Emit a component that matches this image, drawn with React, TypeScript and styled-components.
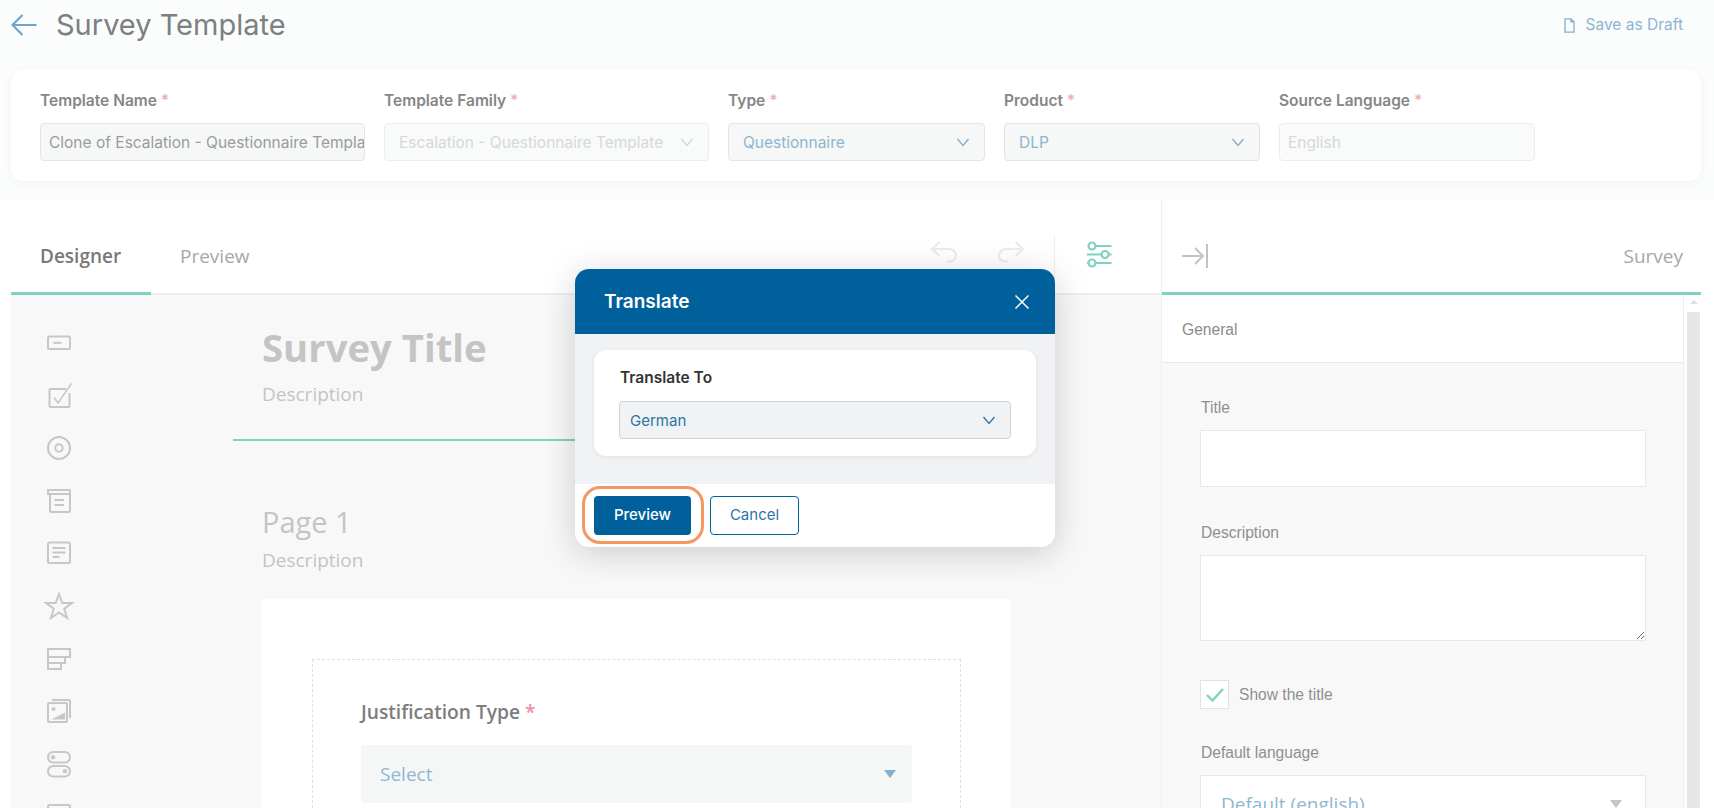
import React from "react";
import styled, { createGlobalStyle } from "styled-components";

const Global = createGlobalStyle`
  html, body { margin: 0; padding: 0; height: 100%; overflow: hidden; background: #fbfcfc; }
  * { box-sizing: border-box; }
`;

const inter = `Inter, "Noto Sans", sans-serif`;
const open = `"Open Sans", "Noto Sans", sans-serif`;
const arial = `"Liberation Sans", Arial, sans-serif`;

const Page = styled.div`
  position: relative;
  width: 1714px;
  height: 808px;
  overflow: hidden;
  background: #fbfcfc;
  font-family: ${inter};
`;

const Header = styled.header`
  height: 50px;
  display: flex;
  align-items: center;
  padding: 0 31px 0 11px;
`;
const BackIcon = styled.svg`
  width: 26px;
  height: 24px;
  flex: none;
  margin-right: 19px;
`;
const PageTitle = styled.h1`
  margin: 0;
  flex: 1;
  font: 400 29px/36px ${inter};
  color: #7d7f81;
`;
const DraftButton = styled.div`
  display: flex;
  align-items: center;
  gap: 11px;
  font: 400 15.5px/20px ${inter};
  color: #8cb5d0;
`;

const TemplateCard = styled.section`
  margin: 20px 13px 0 11px;
  height: 111px;
  padding: 22px 29px 0;
  background: #fff;
  border-radius: 12px;
  box-shadow: 0 2px 10px rgba(60, 80, 90, 0.05);
  display: flex;
  gap: 19px;
`;
const Field = styled.div<{ $w: number }>`
  width: ${(p) => p.$w}px;
  flex: none;
`;
const FieldLabel = styled.div`
  font: 600 15.5px/18px ${inter};
  color: #868686;
  margin-bottom: 13px;
  white-space: nowrap;
`;
const Star = styled.span`
  color: #eeb1b1;
`;
const FieldInput = styled.input`
  display: block;
  width: 100%;
  height: 38px;
  padding: 0 0 0 8px;
  border: 1px solid #e3e5e6;
  border-radius: 4px;
  background: #f6f7f7;
  font: 400 15.5px ${inter};
  color: #9a9c9d;
  outline: none;
  &:disabled {
    background: #f9fafa;
    color: #d6d8d9;
    border-color: #eceeee;
  }
`;
const FieldSelect = styled.div<{ $dim?: boolean }>`
  height: 38px;
  display: flex;
  align-items: center;
  justify-content: space-between;
  padding: 0 14px;
  border: 1px solid ${(p) => (p.$dim ? "#eceeee" : "#e3e5e6")};
  border-radius: 4px;
  background: ${(p) => (p.$dim ? "#f9fafa" : "#f6f7f7")};
  font: 400 15.5px ${inter};
  color: ${(p) => (p.$dim ? "#d6d8d9" : "#8cb5d0")};
  white-space: nowrap;
`;

const Workspace = styled.main`
  margin-top: 18px;
  height: 609px;
  background: #fff;
  display: flex;
`;
const DesignerPane = styled.div`
  width: 1161px;
  padding-left: 11px;
  flex: none;
  display: flex;
  flex-direction: column;
`;
const TabBar = styled.div`
  height: 96px;
  flex: none;
  display: flex;
  align-items: flex-end;
  border-bottom: 2px solid #eeeeee;
`;
const Tab = styled.div<{ $active?: boolean }>`
  height: 78px;
  width: 140px;
  margin-bottom: -2px;
  padding: 2px 0 0 29px;
  display: flex;
  align-items: center;
  font: ${(p) => (p.$active ? 600 : 400)} 19px ${open};
  color: ${(p) => (p.$active ? "#77797a" : "#a9a6a3")};
  border-bottom: 3px solid ${(p) => (p.$active ? "#7dd3c0" : "transparent")};
`;
const TabSpacer = styled.div`
  flex: 1;
`;
const History = styled.div`
  height: 78px;
  display: flex;
  align-items: center;
  gap: 41px;
  padding: 0 29px 4px 0;
`;
const SettingsSlot = styled.div`
  width: 107px;
  height: 58px;
  display: flex;
  align-items: center;
  justify-content: center;
  padding: 0 17px 20px 0;
  border-left: 1px solid #eeeeee;
`;
const Canvas = styled.div`
  flex: 1;
  min-height: 0;
  display: flex;
  background: #f8f8f8;
  overflow: hidden;
`;
const Rail = styled.div`
  width: 222px;
  flex: none;
  padding: 36px 0 0 36px;
  display: flex;
  flex-direction: column;
  gap: 28.6px;
`;
const RailIcon = styled.svg`
  width: 24px;
  height: 24px;
  flex: none;
  overflow: visible;
  fill: none;
  stroke: #c7c7c7;
  stroke-width: 2;
`;
const Sheet = styled.div`
  width: 807px;
  flex: none;
`;
const SurveyHead = styled.div`
  height: 146px;
  padding: 24px 0 0 29px;
  border-bottom: 2px solid #7dd3c0;
`;
const SurveyName = styled.div`
  font: 700 38.3px/56px ${open};
  color: #c4c4c4;
`;
const Desc = styled.div`
  font: 400 19px/26px ${open};
  color: #c4c4c4;
`;
const SurveyDesc = styled(Desc)`
  margin-top: 6px;
`;
const PageBlock = styled.div`
  padding: 60px 0 0 29px;
`;
const PageName = styled.div`
  font: 400 29px/42px ${open};
  color: #c4c4c4;
  margin-bottom: 4px;
`;
const QuestionCard = styled.div`
  margin-top: 26px;
  width: 749px;
  height: 300px;
  padding: 60px 50px 0;
  background: #fff;
  border-radius: 4px;
`;
const Dashed = styled.div`
  height: 300px;
  padding: 38px 48px 0;
  border: 1px dashed #e0e0e0;
`;
const QuestionLabel = styled.div`
  font: 600 19.2px/28px ${open};
  color: #7d7d7d;
  margin-bottom: 19px;
`;
const Required = styled.span`
  color: #f08aa3;
`;
const DropSelect = styled.div`
  height: 58px;
  width: 551px;
  padding: 0 16px 0 19px;
  display: flex;
  align-items: center;
  justify-content: space-between;
  background: #f5f7f7;
  border-radius: 4px;
  font: 400 19px ${open};
  color: #8fb7d2;
`;
const Caret = styled.span<{ $color: string }>`
  width: 0;
  height: 0;
  border-left: 6.5px solid transparent;
  border-right: 6.5px solid transparent;
  border-top: 8px solid ${(p) => p.$color};
`;

const PropertyPane = styled.aside`
  width: 540px;
  flex: none;
  display: flex;
  flex-direction: column;
  border-left: 1px solid #eeeeee;
`;
const PaneHead = styled.div`
  height: 96px;
  flex: none;
  padding: 20px 18px 0 20px;
  display: flex;
  align-items: center;
  justify-content: space-between;
  border-bottom: 3px solid #7dd3c0;
`;
const PaneTitle = styled.span`
  font: 400 19px ${open};
  color: #a9a6a3;
`;
const PaneBody = styled.div`
  flex: 1;
  min-height: 0;
  display: flex;
  gap: 3px;
`;
const PaneMain = styled.div`
  width: 522px;
  flex: none;
  display: flex;
  flex-direction: column;
  border-right: 1px solid #eeeeee;
`;
const GroupHead = styled.div`
  height: 68px;
  flex: none;
  padding: 3px 19px 0 20px;
  display: flex;
  align-items: center;
  background: #fff;
  border-bottom: 1px solid #e8e8e8;
  font: 400 15.6px ${arial};
  color: #8b8b8b;
`;
const GroupBody = styled.div`
  flex: 1;
  background: #f8f8f8;
  padding: 35px 38px 0;
  overflow: hidden;
`;
const PropLabel = styled.div`
  font: 400 15.6px/20px ${arial};
  color: #8f8f8f;
  margin-bottom: 12px;
  padding-left: 1px;
`;
const PropInput = styled.input`
  display: block;
  width: 446px;
  height: 57px;
  margin-bottom: 36px;
  border: 1px solid #e8e8e8;
  background: #fff;
  outline: none;
`;
const PropArea = styled.textarea`
  display: block;
  width: 446px;
  height: 86px;
  margin: 0 0 39px;
  border: 1px solid #e8e8e8;
  background: #fff;
  outline: none;
`;
const CheckRow = styled.div`
  display: flex;
  align-items: center;
  gap: 10px;
  margin-bottom: 34px;
  font: 400 15.6px ${arial};
  color: #8f8f8f;
`;
const CheckBox = styled.div`
  width: 29px;
  height: 29px;
  display: flex;
  align-items: center;
  justify-content: center;
  background: #fff;
  border: 1px solid #e3e3e3;
`;
const PropSelect = styled.div`
  width: 446px;
  height: 58px;
  padding: 0 23px 0 20px;
  display: flex;
  align-items: center;
  justify-content: space-between;
  background: #fff;
  border: 1px solid #e8e8e8;
  font: 400 19px ${open};
  color: #8fb7d2;
`;
const Scrollbar = styled.div`
  width: 13px;
  flex: none;
  display: flex;
  flex-direction: column;
  align-items: center;
`;
const ScrollUp = styled.div`
  height: 17px;
  flex: none;
  padding-top: 5px;
`;
const ScrollArrow = styled.div`
  width: 0;
  height: 0;
  border-left: 4px solid transparent;
  border-right: 4px solid transparent;
  border-bottom: 4px solid #dedede;
`;
const ScrollThumb = styled.div`
  flex: 1;
  width: 13px;
  background: #e6e6e6;
`;

const Modal = styled.div`
  position: absolute;
  left: 575px;
  top: 269px;
  width: 480px;
  height: 278px;
  border-radius: 14px;
  display: flex;
  flex-direction: column;
  background: #fff;
  box-shadow: 0 6px 34px rgba(0, 0, 0, 0.18);
`;
const ModalHead = styled.div`
  height: 65px;
  flex: none;
  padding: 0 25px 0 29px;
  display: flex;
  align-items: center;
  justify-content: space-between;
  background: #00609c;
  border-radius: 14px 14px 0 0;
  font: 600 19px ${inter};
  color: #fff;
`;
const ModalBody = styled.div`
  height: 150px;
  flex: none;
  padding: 16px 19px 0;
  background: #f0f2f4;
`;
const TranslateCard = styled.div`
  height: 106px;
  padding: 18px 25px 0;
  background: #fff;
  border-radius: 12px;
  box-shadow: 0 1px 5px rgba(0, 0, 0, 0.07);
`;
const TranslateLabel = styled.div`
  font: 600 15.5px/20px ${inter};
  color: #333333;
  margin-bottom: 13px;
  padding-left: 1px;
`;
const TranslateSelect = styled.div`
  height: 38px;
  padding: 0 14px 0 10px;
  display: flex;
  align-items: center;
  justify-content: space-between;
  background: #f0f2f4;
  border: 1px solid #d0d3d6;
  border-radius: 4px;
  font: 400 15px ${inter};
  color: #2c74a6;
`;
const ModalFoot = styled.div`
  flex: 1;
  padding: 12px 19px 0;
  display: flex;
  align-items: flex-start;
  gap: 19px;
  border-radius: 0 0 14px 14px;
`;
const PrimaryButton = styled.button`
  position: relative;
  width: 97px;
  height: 39px;
  padding: 0 0 2px;
  border: none;
  border-radius: 4px;
  background: #00609c;
  color: #fff;
  font: 500 15px ${inter};
  &::after {
    content: "";
    position: absolute;
    inset: -10px -13px -9px -12px;
    border: 3px solid #f4985f;
    border-radius: 18px;
  }
`;
const GhostButton = styled.button`
  width: 89px;
  height: 39px;
  padding: 0 0 2px;
  border: 1px solid #00609c;
  border-radius: 4px;
  background: #fff;
  color: #2c74a6;
  font: 400 15px ${inter};
`;

const Chevron = ({ color }: { color: string }) => (
  <svg width="14" height="9" viewBox="0 0 14 9" fill="none" stroke={color} strokeWidth="1.3">
    <path d="M1.500 1l5.500 6.500L12.500 1" />
  </svg>
);

const railIcons: React.ReactNode[] = [
  <>
    <rect x="1" y="5.500" width="22" height="12.500" rx="1.500" />
    <path d="M6.500 11.800h8" />
  </>,
  <>
    <path d="M22.500 9v13a1 1 0 0 1-1 1H3.500a1 1 0 0 1-1-1V6a1 1 0 0 1 1-1H19" strokeWidth="2" />
    <path d="M7 13.500l4 5.500L24.500 -.5" strokeWidth="1.500" />
  </>,
  <>
    <circle cx="12" cy="12" r="11" />
    <circle cx="12" cy="12" r="3.700" />
  </>,
  <>
    <path d="M1 1h22v4H1z" />
    <path d="M3 5v17a1 1 0 0 0 1 1h18a1 1 0 0 0 1-1V5M7.500 11h9.500M7.500 16h9.500" />
  </>,
  <>
    <rect x="1" y="1.500" width="22" height="20.500" rx="1.500" />
    <path d="M5.500 7h13M5.500 11.500h13M5.500 16h7" />
  </>,
  <path d="M12 0l3.300 9h9.700l-7.800 5.700 3 9.300L12 18.500l-8.200 5.500 3-9.300L-1 9h9.700z" />,
  <path d="M1 2h22v8H1zM1 10h17v6H1zM1 16h13v6H1z" />,
  <>
    <path d="M5 1h17a1 1 0 0 1 1 1v17" />
    <rect x="1" y="4" width="19" height="19" rx="1" />
    <circle cx="6.500" cy="10" r="2" fill="#c7c7c7" stroke="none" />
    <path d="M4.500 20.500h13.500v-7z" fill="#c7c7c7" stroke="none" />
  </>,
  <>
    <rect x="1" y="0" width="22" height="10.500" rx="5.250" />
    <rect x="1" y="14" width="22" height="10.500" rx="5.250" />
    <circle cx="6" cy="5.250" r="2.200" fill="#c7c7c7" stroke="none" />
    <circle cx="18" cy="19.250" r="2.200" fill="#c7c7c7" stroke="none" />
  </>,
  <rect x="1" y="1" width="22" height="22" rx="1.500" />,
];

export default function App() {
  return (
    <Page>
      <Global />
      <Header>
        <BackIcon viewBox="0 0 26 24" fill="none" stroke="#6ea6cc" strokeWidth="2.200">
          <path d="M25.500 12H2M11.500 2L1.500 12l10 10" />
        </BackIcon>
        <PageTitle>Survey Template</PageTitle>
        <DraftButton>
          <svg width="11" height="15" viewBox="0 0 11 15" fill="none" stroke="#7fb0d0" strokeWidth="1.300">
            <path d="M1 .8h6l3 3v10.400H1zM7 .8v3h3" />
          </svg>
          Save as Draft
        </DraftButton>
      </Header>

      <TemplateCard>
        <Field $w={325}>
          <FieldLabel>Template Name <Star>*</Star></FieldLabel>
          <FieldInput readOnly value="Clone of Escalation - Questionnaire Template" />
        </Field>
        <Field $w={325}>
          <FieldLabel>Template Family <Star>*</Star></FieldLabel>
          <FieldSelect $dim>
            Escalation - Questionnaire Template
            <Chevron color="#d4d6d8" />
          </FieldSelect>
        </Field>
        <Field $w={257}>
          <FieldLabel>Type <Star>*</Star></FieldLabel>
          <FieldSelect>
            Questionnaire
            <Chevron color="#7fb0d0" />
          </FieldSelect>
        </Field>
        <Field $w={256}>
          <FieldLabel>Product <Star>*</Star></FieldLabel>
          <FieldSelect>
            DLP
            <Chevron color="#7fb0d0" />
          </FieldSelect>
        </Field>
        <Field $w={256}>
          <FieldLabel>Source Language <Star>*</Star></FieldLabel>
          <FieldInput disabled value="English" />
        </Field>
      </TemplateCard>

      <Workspace>
        <DesignerPane>
          <TabBar>
            <Tab $active>Designer</Tab>
            <Tab>Preview</Tab>
            <TabSpacer />
            <History>
              <svg width="27" height="22" viewBox="0 0 27 22" fill="none" stroke="#ececec" strokeWidth="2.200">
                <path d="M9.500 1L2 8l7.500 7M2 8h17a7 7 0 0 1 7 6.500 6 6 0 0 1-6 6h-3" />
              </svg>
              <svg width="27" height="22" viewBox="0 0 27 22" fill="none" stroke="#ececec" strokeWidth="2.200">
                <path d="M17.500 1L25 8l-7.500 7M25 8H8a7 7 0 0 0-7 6.500 6 6 0 0 0 6 6h3" />
              </svg>
            </History>
            <SettingsSlot>
              <svg width="25" height="27" viewBox="0 0 25 27" fill="none" stroke="#7dd3c0" strokeWidth="2.200">
                <path d="M8.500 5h16M0 13.500h14M22 13.500h2.500M8.500 22h16M0 22h1" />
                <circle cx="5" cy="5" r="3.500" />
                <circle cx="18" cy="13.500" r="3.500" />
                <circle cx="5" cy="22" r="3.500" />
              </svg>
            </SettingsSlot>
          </TabBar>
          <Canvas>
            <Rail>
              {railIcons.map((icon, i) => (
                <RailIcon key={i} viewBox="0 0 24 24">
                  {icon}
                </RailIcon>
              ))}
            </Rail>
            <Sheet>
              <SurveyHead>
                <SurveyName>Survey Title</SurveyName>
                <SurveyDesc>Description</SurveyDesc>
              </SurveyHead>
              <PageBlock>
                <PageName>Page 1</PageName>
                <Desc>Description</Desc>
                <QuestionCard>
                  <Dashed>
                    <QuestionLabel>Justification Type <Required>*</Required></QuestionLabel>
                    <DropSelect>
                      Select
                      <Caret $color="#7fb0d0" />
                    </DropSelect>
                  </Dashed>
                </QuestionCard>
              </PageBlock>
            </Sheet>
          </Canvas>
        </DesignerPane>

        <PropertyPane>
          <PaneHead>
            <svg width="26" height="26" viewBox="0 0 26 26" fill="none" stroke="#c2c2c2" strokeWidth="2">
              <path d="M0 13h21M13 5l8 8-8 8" />
              <path d="M25 1v24" />
            </svg>
            <PaneTitle>Survey</PaneTitle>
          </PaneHead>
          <PaneBody>
            <PaneMain>
              <GroupHead>General</GroupHead>
              <GroupBody>
                <PropLabel>Title</PropLabel>
                <PropInput />
                <PropLabel>Description</PropLabel>
                <PropArea />
                <CheckRow>
                  <CheckBox>
                    <svg width="18" height="14" viewBox="0 0 18 14" fill="none" stroke="#7dd3c0" strokeWidth="2.400">
                      <path d="M1 7l5.500 5.500L17 1" />
                    </svg>
                  </CheckBox>
                  Show the title
                </CheckRow>
                <PropLabel>Default language</PropLabel>
                <PropSelect>
                  Default (english)
                  <Caret $color="#c4c4c4" />
                </PropSelect>
              </GroupBody>
            </PaneMain>
            <Scrollbar>
              <ScrollUp>
                <ScrollArrow />
              </ScrollUp>
              <ScrollThumb />
            </Scrollbar>
          </PaneBody>
        </PropertyPane>
      </Workspace>

      <Modal>
        <ModalHead>
          Translate
          <svg width="16" height="16" viewBox="0 0 16 16" fill="none" stroke="#fff" strokeWidth="1.500">
            <path d="M1.500 1.500l13 13M14.500 1.500l-13 13" />
          </svg>
        </ModalHead>
        <ModalBody>
          <TranslateCard>
            <TranslateLabel>Translate To</TranslateLabel>
            <TranslateSelect>
              German
              <Chevron color="#2c74a6" />
            </TranslateSelect>
          </TranslateCard>
        </ModalBody>
        <ModalFoot>
          <PrimaryButton>Preview</PrimaryButton>
          <GhostButton>Cancel</GhostButton>
        </ModalFoot>
      </Modal>
    </Page>
  );
}
